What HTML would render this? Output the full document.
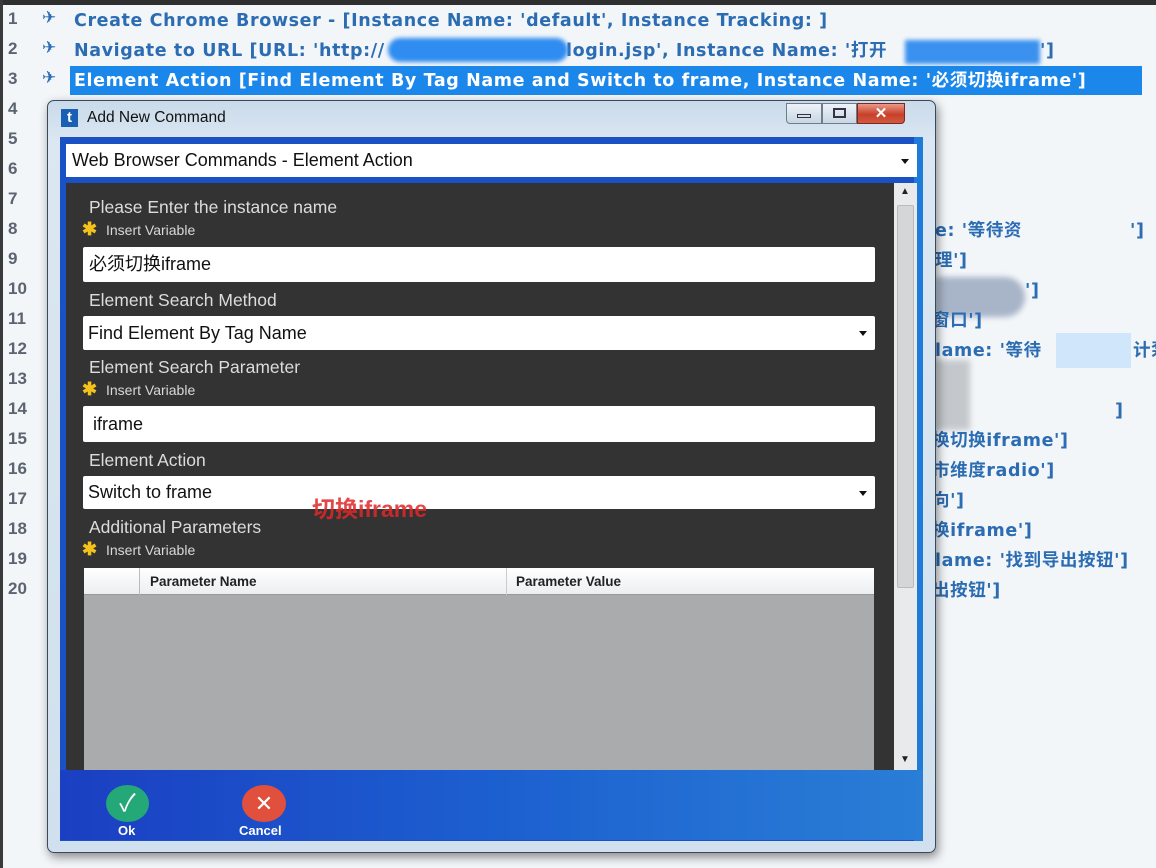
<!DOCTYPE html>
<html><head><meta charset="utf-8"><style>
*{margin:0;padding:0;box-sizing:border-box}
body{width:1156px;height:868px;overflow:hidden;background:#f3f6f9;position:relative;font-family:"Liberation Sans","Noto Sans CJK SC",sans-serif}
.a{position:absolute;white-space:nowrap}
.num{color:#5b6470;font-weight:bold;font-size:17px;left:8px}
.ln{color:#2b6cb3;font-weight:bold;font-size:17.5px;line-height:21px;font-family:"DejaVu Sans","Noto Sans CJK SC",sans-serif;letter-spacing:.6px;margin-top:2px}
.ic{color:#2b6cb3;font-size:17px;left:42px}
.lbl{color:#dcdcdc;font-size:17.5px;left:89px}
.iv{color:#d8d8d8;font-size:14px;left:106px}
.star{color:#f3c31a;font-size:18px;left:82px;font-weight:bold}
.inp{position:absolute;left:83px;width:792px;background:#fff;border-radius:2px;font-size:18px;color:#111;padding-left:6px}
.dd::after{content:"";position:absolute;right:8px;top:50%;margin-top:-2px;border-left:4px solid transparent;border-right:4px solid transparent;border-top:5px solid #111}
</style></head><body>
<div class="a" style="left:0;top:0;width:1156px;height:5px;background:#2f2f2f"></div>
<div class="a" style="left:0;top:0;width:3px;height:868px;background:#3a3a3a"></div>

<div class="a num" style="top:9px">1</div><div class="a ic" style="top:8px">✈</div>
<div class="a ln" style="left:74px;top:9px">Create Chrome Browser - [Instance Name: 'default', Instance Tracking: ]</div>
<div class="a num" style="top:39px">2</div><div class="a ic" style="top:38px">✈</div>
<div class="a ln" style="left:74px;top:39px">Navigate to URL [URL: 'http://</div>
<div class="a ln" style="left:566px;top:39px">login.jsp', Instance Name: '打开</div>
<div class="a ln" style="left:1040px;top:39px">']</div>
<div class="a" style="left:388px;top:38px;width:180px;height:24px;background:#2f8cf0;border-radius:12px;filter:blur(2px)"></div>
<div class="a" style="left:905px;top:40px;width:135px;height:24px;background:#3a91ef;filter:blur(2px)"></div>
<div class="a num" style="top:69px">3</div><div class="a ic" style="top:68px">✈</div>
<div class="a" style="left:70px;top:66px;width:1072px;height:29px;background:#1c87ea"></div>
<div class="a ln" style="left:74px;top:69px;color:#fff">Element Action [Find Element By Tag Name and Switch to frame, Instance Name: '必须切换iframe']</div>
<div class="a num" style="top:99px">4</div>
<div class="a num" style="top:129px">5</div>
<div class="a num" style="top:159px">6</div>
<div class="a num" style="top:189px">7</div>
<div class="a num" style="top:219px">8</div>
<div class="a num" style="top:249px">9</div>
<div class="a num" style="top:279px">10</div>
<div class="a num" style="top:309px">11</div>
<div class="a num" style="top:339px">12</div>
<div class="a num" style="top:369px">13</div>
<div class="a num" style="top:399px">14</div>
<div class="a num" style="top:429px">15</div>
<div class="a num" style="top:459px">16</div>
<div class="a num" style="top:489px">17</div>
<div class="a num" style="top:519px">18</div>
<div class="a num" style="top:549px">19</div>
<div class="a num" style="top:579px">20</div>

<div class="a ln" style="left:935px;top:219px">e: '等待资</div>
<div class="a ln" style="left:1130px;top:219px">']</div>
<div class="a ln" style="left:935px;top:249px">理']</div>
<div class="a" style="left:935px;top:277px;width:90px;height:40px;background:#a8b4c8;border-radius:0 20px 20px 0;filter:blur(3px)"></div>
<div class="a ln" style="left:1025px;top:279px">']</div>
<div class="a ln" style="left:932px;top:309px">窗口']</div>
<div class="a ln" style="left:935px;top:339px">lame: '等待</div>
<div class="a" style="left:1056px;top:333px;width:75px;height:35px;background:#cfe6fb"></div>
<div class="a ln" style="left:1133px;top:339px">计泵</div>
<div class="a" style="left:935px;top:360px;width:35px;height:70px;background:#c4c8cc;filter:blur(3px)"></div>
<div class="a ln" style="left:1115px;top:399px">]</div>
<div class="a ln" style="left:932px;top:429px">换切换iframe']</div>
<div class="a ln" style="left:932px;top:459px">市维度radio']</div>
<div class="a ln" style="left:932px;top:489px">向']</div>
<div class="a ln" style="left:932px;top:519px">换iframe']</div>
<div class="a ln" style="left:935px;top:549px">lame: '找到导出按钮']</div>
<div class="a ln" style="left:932px;top:579px">出按钮']</div>

<div class="a" style="left:47px;top:100px;width:889px;height:753px;border:1px solid #3a4a5a;border-radius:7px;background:linear-gradient(#c9daea,#dbe7f2 40px,#d0e0ee);box-shadow:2px 4px 10px rgba(0,0,0,.45)"></div>
<div class="a" style="left:61px;top:109px;width:17px;height:18px;background:#1a5fb4;color:#fff;font-weight:bold;font-size:15px;text-align:center;line-height:18px">t</div>
<div class="a" style="left:87px;top:109px;font-size:15.5px;color:#111">Add New Command</div>
<div class="a" style="left:786px;top:103px;width:36px;height:21px;border:1px solid #6d7d8d;border-radius:0 0 0 4px;background:linear-gradient(#eef3f8,#c8d6e4)"></div>
<div class="a" style="left:797px;top:114px;width:14px;height:4px;border:1px solid #334"></div>
<div class="a" style="left:822px;top:103px;width:35px;height:21px;border:1px solid #6d7d8d;background:linear-gradient(#eef3f8,#c8d6e4)"></div>
<div class="a" style="left:833px;top:108px;width:13px;height:10px;border:2px solid #334"></div>
<div class="a" style="left:857px;top:103px;width:48px;height:21px;border:1px solid #7a2a20;border-radius:0 0 4px 0;background:linear-gradient(#e89a88,#c8402a 55%,#d25a40);color:#fff;font-weight:bold;font-size:15px;text-align:center;line-height:19px">✕</div>

<div class="a" style="left:60px;top:137px;width:863px;height:704px;background:#1a52c6"></div>
<div class="a" style="left:914px;top:137px;width:9px;height:704px;background:#1f7bd8"></div>
<div class="a dd" style="left:66px;top:144px;width:851px;height:33px;background:#fff;font-size:18px;color:#111;padding:6px 0 0 6px">Web Browser Commands - Element Action</div>
<div class="a" style="left:66px;top:183px;width:828px;height:587px;background:#333333"></div>
<div class="a" style="left:894px;top:183px;width:23px;height:587px;background:#e8eaec"></div>
<div class="a" style="left:897px;top:205px;width:17px;height:383px;background:#d4d6d8;border:1px solid #bbb;border-radius:2px"></div>
<div class="a" style="left:900px;top:186px;font-size:10px;color:#222">▲</div>
<div class="a" style="left:900px;top:754px;font-size:10px;color:#222">▼</div>

<div class="a lbl" style="top:197px">Please Enter the instance name</div>
<div class="a star" style="top:219px">✱</div><div class="a iv" style="top:222px">Insert Variable</div>
<div class="inp" style="top:247px;height:35px;line-height:35px">必须切换iframe</div>
<div class="a lbl" style="top:290px">Element Search Method</div>
<div class="inp dd" style="top:316px;height:34px;line-height:34px;padding-left:5px">Find Element By Tag Name</div>
<div class="a lbl" style="top:357px">Element Search Parameter</div>
<div class="a star" style="top:379px">✱</div><div class="a iv" style="top:382px">Insert Variable</div>
<div class="inp" style="top:406px;height:36px;line-height:36px;padding-left:10px">iframe</div>
<div class="a lbl" style="top:450px">Element Action</div>
<div class="inp dd" style="top:476px;height:33px;line-height:33px;padding-left:5px">Switch to frame</div>
<div class="a" style="left:312px;top:490px;color:#e02828;font-size:23px;font-weight:bold;opacity:.85">切换iframe</div>
<div class="a lbl" style="top:517px">Additional Parameters</div>
<div class="a star" style="top:539px">✱</div><div class="a iv" style="top:542px">Insert Variable</div>
<div class="a" style="left:84px;top:568px;width:790px;height:202px;background:#a9abad"></div>
<div class="a" style="left:84px;top:568px;width:790px;height:27px;background:linear-gradient(#fff,#eceef0);border-bottom:1px solid #999"></div>
<div class="a" style="left:139px;top:568px;width:1px;height:27px;background:#bbb"></div>
<div class="a" style="left:506px;top:568px;width:1px;height:27px;background:#ccc"></div>
<div class="a" style="left:150px;top:574px;font-size:13.5px;font-weight:bold;color:#222">Parameter Name</div>
<div class="a" style="left:516px;top:574px;font-size:13.5px;font-weight:bold;color:#222">Parameter Value</div>

<div class="a" style="left:60px;top:770px;width:863px;height:70px;background:linear-gradient(90deg,#1b3fc2,#1c5fd0 50%,#2a7ed6)"></div>
<div class="a" style="left:106px;top:785px;width:43px;height:37px;border-radius:50%;background:#25a878;color:#fff;font-size:24px;text-align:center;line-height:37px">✓</div>
<div class="a" style="left:118px;top:823px;color:#fff;font-size:13px;font-weight:bold">Ok</div>
<div class="a" style="left:242px;top:785px;width:44px;height:37px;border-radius:50%;background:#e0503c;color:#fff;font-size:22px;text-align:center;line-height:37px">✕</div>
<div class="a" style="left:239px;top:823px;color:#fff;font-size:13px;font-weight:bold">Cancel</div>
</body></html>
